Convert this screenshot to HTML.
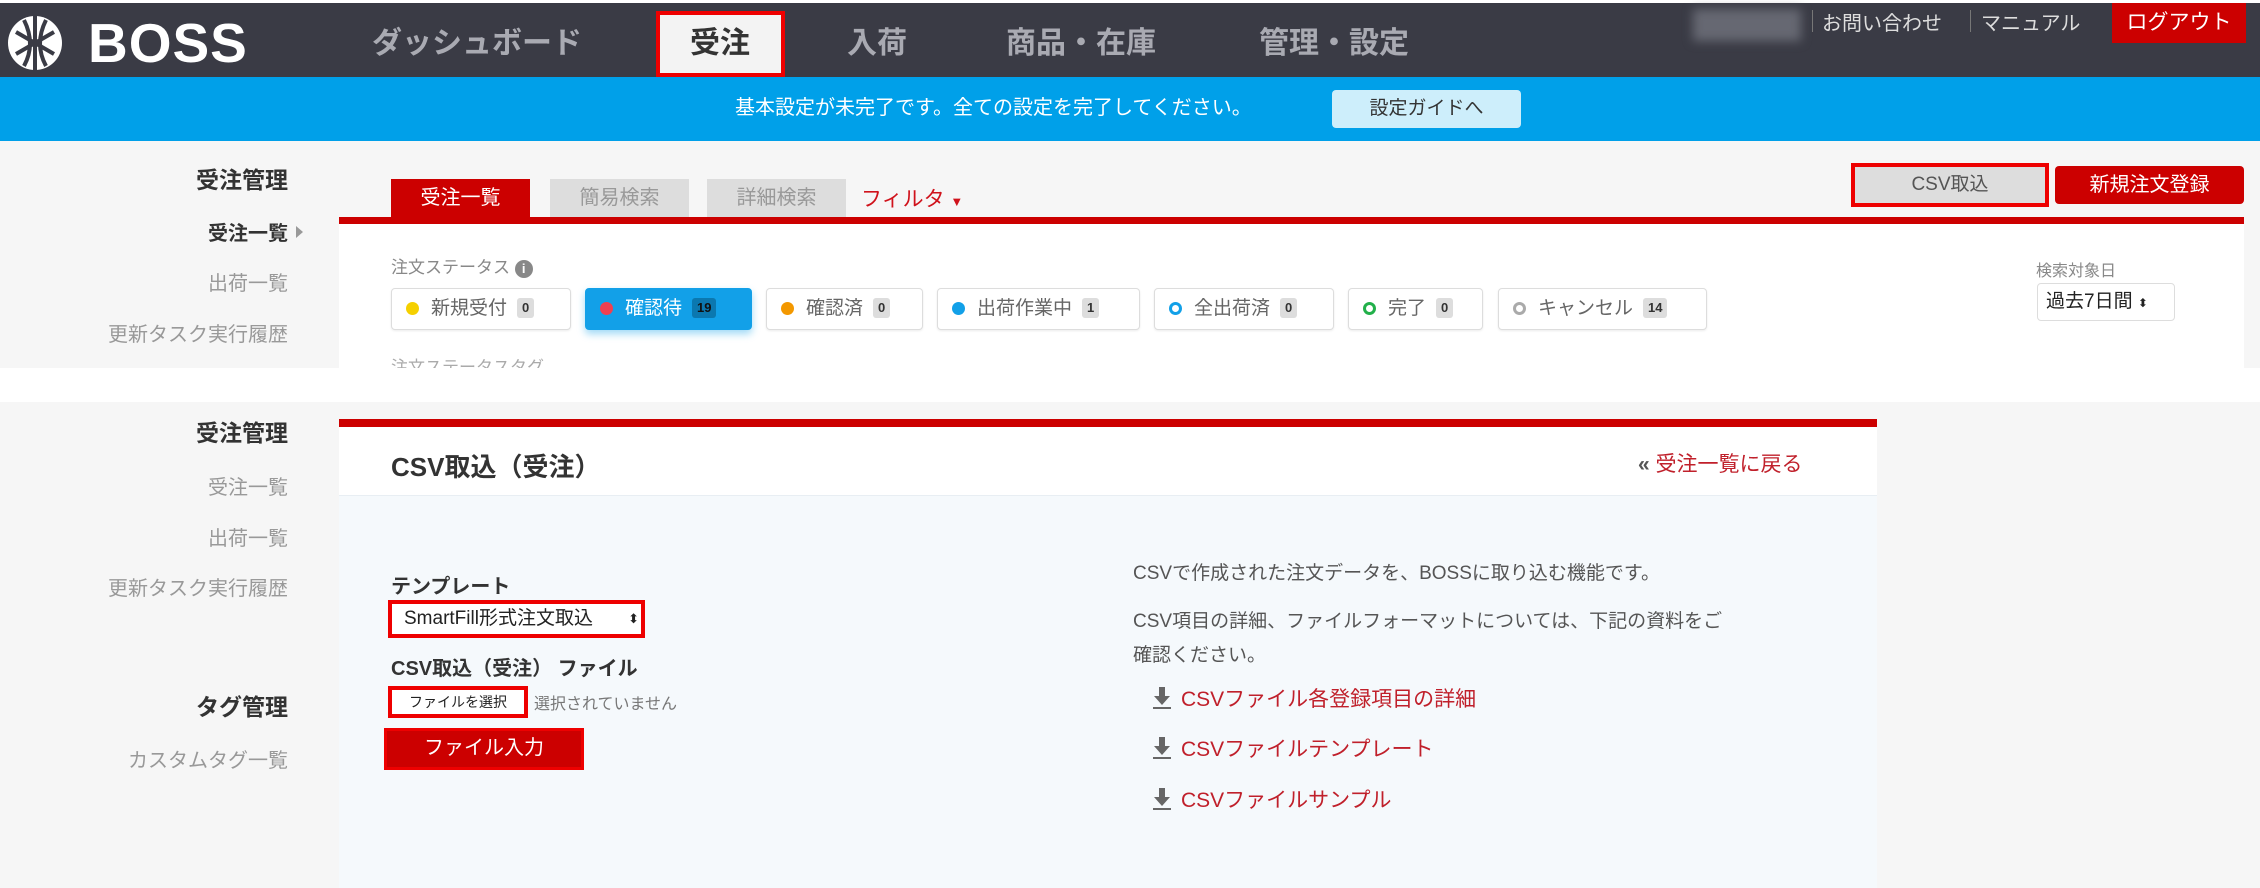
<!DOCTYPE html>
<html><head><meta charset="utf-8"><style>
*{margin:0;padding:0;box-sizing:border-box}
body{width:2260px;height:888px;overflow:hidden;background:#fff;font-family:"Liberation Sans","Noto Sans CJK JP",sans-serif;position:relative;color:#333}
.a{position:absolute;white-space:nowrap}
.nav{color:#a9aab2;font-size:30px;font-weight:bold;top:26px;line-height:36px}
.side{font-size:20px;color:#999;text-align:right;right:calc(2260px - 288px);line-height:24px}
.sideb{color:#333;font-weight:bold;font-size:23px}
.chip{top:288px;height:42px;border:1px solid #ddd;border-radius:4px;background:#fff;font-size:19px;color:#666;line-height:40px;padding-left:14px;box-shadow:0 1px 2px rgba(0,0,0,.08)}
.dot{display:inline-block;width:13px;height:13px;border-radius:50%;margin-right:12px;vertical-align:-1px}
.ring{display:inline-block;width:13px;height:13px;border-radius:50%;border:3px solid;margin-right:12px;vertical-align:-1px}
.cnt{display:inline-block;background:#ddd;color:#333;font-size:13px;font-weight:bold;line-height:20px;padding:0 5px;border-radius:3px;margin-left:10px;vertical-align:2px}
.lnk{color:#c0202b;font-size:21px;left:1181px}
.dl{left:1152px;width:20px}
</style></head><body>
<div class="a" style="left:0;top:3px;width:2260px;height:74px;background:#3a3b45"></div>
<svg class="a" style="left:6px;top:14px" width="58" height="58" viewBox="0 0 58 58"><circle cx="29" cy="29" r="27" fill="#fff"/><g stroke="#3a3b45" stroke-width="4" fill="none"><path d="M10 18 L48 40 M10 40 L48 18 M29 2 L29 56 M18 6 Q30 30 18 52 M40 6 Q28 30 40 52"/></g></svg>
<div class="a" style="left:88px;top:10px;font-size:55px;font-weight:bold;color:#fff;line-height:66px;letter-spacing:1px">BOSS</div>
<div class="a nav" style="left:372px">ダッシュボード</div>
<div class="a" style="left:656px;top:11px;width:129px;height:66px;background:#f3f3f3;border:4px solid #e00"></div>
<div class="a nav" style="left:690px;color:#333">受注</div>
<div class="a nav" style="left:847px">入荷</div>
<div class="a nav" style="left:1006px">商品・在庫</div>
<div class="a nav" style="left:1259px">管理・設定</div>
<div class="a" style="left:1693px;top:9px;width:108px;height:32px;background:#666872;filter:blur(5px)"></div>
<div class="a" style="left:1812px;top:10px;width:1px;height:22px;background:#777"></div>
<div class="a" style="left:1822px;top:7px;font-size:20px;color:#ddd">お問い合わせ</div>
<div class="a" style="left:1970px;top:10px;width:1px;height:22px;background:#777"></div>
<div class="a" style="left:1981px;top:7px;font-size:20px;color:#ddd">マニュアル</div>
<div class="a" style="left:2112px;top:3px;width:134px;height:40px;background:#c00;color:#fff;font-size:21px;line-height:40px;text-align:center">ログアウト</div>
<div class="a" style="left:0;top:77px;width:2260px;height:64px;background:#00a0e9"></div>
<div class="a" style="left:735px;top:94px;font-size:20px;color:#fff;line-height:28px">基本設定が未完了です。全ての設定を完了してください。</div>
<div class="a" style="left:1332px;top:90px;width:189px;height:38px;background:#cdeefb;border-radius:4px;font-size:19px;line-height:38px;text-align:center;color:#333">設定ガイドへ</div>
<div class="a" style="left:0;top:141px;width:2260px;height:227px;background:#f6f6f6"></div>
<div class="a" style="left:339px;top:224px;width:1905px;height:144px;background:#fff"></div>
<div class="a" style="left:339px;top:217px;width:1905px;height:7px;background:#c00"></div>
<div class="a side sideb" style="top:168px">受注管理</div>
<div class="a side sideb" style="top:222px;font-size:20px">受注一覧</div>
<div class="a" style="left:296px;top:226px;width:0;height:0;border-left:7px solid #999;border-top:6px solid transparent;border-bottom:6px solid transparent"></div>
<div class="a side" style="top:272px">出荷一覧</div>
<div class="a side" style="top:323px">更新タスク実行履歴</div>
<div class="a" style="left:391px;top:179px;width:139px;height:38px;background:#c00;color:#fff;font-size:20px;line-height:38px;text-align:center">受注一覧</div>
<div class="a" style="left:550px;top:179px;width:139px;height:38px;background:#ddd;color:#999;font-size:20px;line-height:38px;text-align:center">簡易検索</div>
<div class="a" style="left:707px;top:179px;width:139px;height:38px;background:#ddd;color:#999;font-size:20px;line-height:38px;text-align:center">詳細検索</div>
<div class="a" style="left:861px;top:183px;color:#d0121b;font-size:21px">フィルタ <span style="font-size:13px">▼</span></div>
<div class="a" style="left:1851px;top:163px;width:198px;height:44px;border:4px solid #e00;background:#ddd;font-size:19px;color:#555;line-height:36px;text-align:center">CSV取込</div>
<div class="a" style="left:2055px;top:166px;width:189px;height:38px;background:#c00;border-radius:4px;font-size:20px;color:#fff;line-height:38px;text-align:center">新規注文登録</div>
<div class="a" style="left:391px;top:253px;font-size:17px;color:#888">注文ステータス <span style="display:inline-block;width:18px;height:18px;border-radius:50%;background:#888;color:#fff;font-size:13px;line-height:18px;text-align:center;font-weight:bold">i</span></div>
<div class="a chip" style="left:391px;width:180px"><span class="dot" style="background:#f5d000"></span>新規受付<span class="cnt">0</span></div>
<div class="a chip" style="left:585px;width:167px;background:#12a0e8;border-color:#12a0e8;color:#fff;box-shadow:0 4px 8px rgba(18,160,232,.4)"><span class="dot" style="background:#f04050"></span>確認待<span class="cnt" style="background:#0b78b0;color:#111">19</span></div>
<div class="a chip" style="left:766px;width:157px"><span class="dot" style="background:#f39800"></span>確認済<span class="cnt">0</span></div>
<div class="a chip" style="left:937px;width:203px"><span class="dot" style="background:#12a0e8"></span>出荷作業中<span class="cnt">1</span></div>
<div class="a chip" style="left:1154px;width:180px"><span class="ring" style="border-color:#12a0e8"></span>全出荷済<span class="cnt">0</span></div>
<div class="a chip" style="left:1348px;width:135px"><span class="ring" style="border-color:#22b04a"></span>完了<span class="cnt">0</span></div>
<div class="a chip" style="left:1498px;width:209px"><span class="ring" style="border-color:#aaa"></span>キャンセル<span class="cnt">14</span></div>
<div class="a" style="left:2036px;top:257px;font-size:16px;color:#888">検索対象日</div>
<div class="a" style="left:2037px;top:283px;width:138px;height:38px;border:1px solid #ddd;border-radius:4px;background:#fff;font-size:19px;line-height:36px;padding-left:8px;color:#222">過去7日間 <span style="font-size:12px">⬍</span></div>
<div class="a" style="left:391px;top:356px;height:12px;overflow:hidden;font-size:17px;color:#aaa;line-height:24px">注文ステータスタグ</div>
<div class="a" style="left:0;top:402px;width:2260px;height:486px;background:#f6f6f6"></div>
<div class="a" style="left:339px;top:419px;width:1538px;height:8px;background:#c00"></div>
<div class="a" style="left:339px;top:427px;width:1538px;height:68px;background:#fff"></div>
<div class="a" style="left:339px;top:495px;width:1538px;height:393px;background:#f5f9fc;border-top:1px solid #e8eef3"></div>
<div class="a side sideb" style="top:421px">受注管理</div>
<div class="a side" style="top:476px">受注一覧</div>
<div class="a side" style="top:527px">出荷一覧</div>
<div class="a side" style="top:577px">更新タスク実行履歴</div>
<div class="a side sideb" style="top:695px">タグ管理</div>
<div class="a side" style="top:749px">カスタムタグ一覧</div>
<div class="a" style="left:391px;top:447px;font-size:26px;font-weight:bold;color:#333">CSV取込（受注）</div>
<div class="a" style="left:1638px;top:448px;font-size:21px;color:#c0202b"><span style="color:#555;font-weight:bold">«</span> 受注一覧に戻る</div>
<div class="a" style="left:391px;top:570px;font-size:20px;font-weight:bold;color:#333">テンプレート</div>
<div class="a" style="left:388px;top:600px;width:257px;height:38px;border:4px solid #e00;background:#fff;font-size:19px;line-height:30px;padding-left:12px;overflow:hidden;color:#222">SmartFill形式注文取込<span class="a" style="right:2px;top:0;background:#fff;font-size:13px;padding-left:2px">⬍</span></div>
<div class="a" style="left:391px;top:652px;font-size:20px;font-weight:bold;color:#333">CSV取込（受注） ファイル</div>
<div class="a" style="left:388px;top:686px;width:140px;height:32px;border:4px solid #e00;background:#fff;font-size:14px;line-height:24px;text-align:center;color:#222">ファイルを選択</div>
<div class="a" style="left:534px;top:690px;font-size:16px;color:#777">選択されていません</div>
<div class="a" style="left:384px;top:728px;width:200px;height:42px;background:#c00;border:3px solid #e00;font-size:20px;line-height:34px;text-align:center;color:#fff">ファイル入力</div>
<div class="a" style="left:1133px;top:558px;font-size:19px;color:#555">CSVで作成された注文データを、BOSSに取り込む機能です。</div>
<div class="a" style="left:1133px;top:605px;font-size:19px;color:#555;line-height:34px;white-space:normal;width:700px">CSV項目の詳細、ファイルフォーマットについては、下記の資料をご<br>確認ください。</div>
<svg class="a dl" style="top:686px" width="20" height="24" viewBox="0 0 20 24"><path d="M7 1h6v9h5l-8 9-8-9h5z" fill="#666"/><rect x="1" y="21" width="18" height="2" fill="#666"/></svg>
<div class="a lnk" style="top:683px">CSVファイル各登録項目の詳細</div>
<svg class="a dl" style="top:736px" width="20" height="24" viewBox="0 0 20 24"><path d="M7 1h6v9h5l-8 9-8-9h5z" fill="#666"/><rect x="1" y="21" width="18" height="2" fill="#666"/></svg>
<div class="a lnk" style="top:733px">CSVファイルテンプレート</div>
<svg class="a dl" style="top:787px" width="20" height="24" viewBox="0 0 20 24"><path d="M7 1h6v9h5l-8 9-8-9h5z" fill="#666"/><rect x="1" y="21" width="18" height="2" fill="#666"/></svg>
<div class="a lnk" style="top:784px">CSVファイルサンプル</div>
</body></html>
